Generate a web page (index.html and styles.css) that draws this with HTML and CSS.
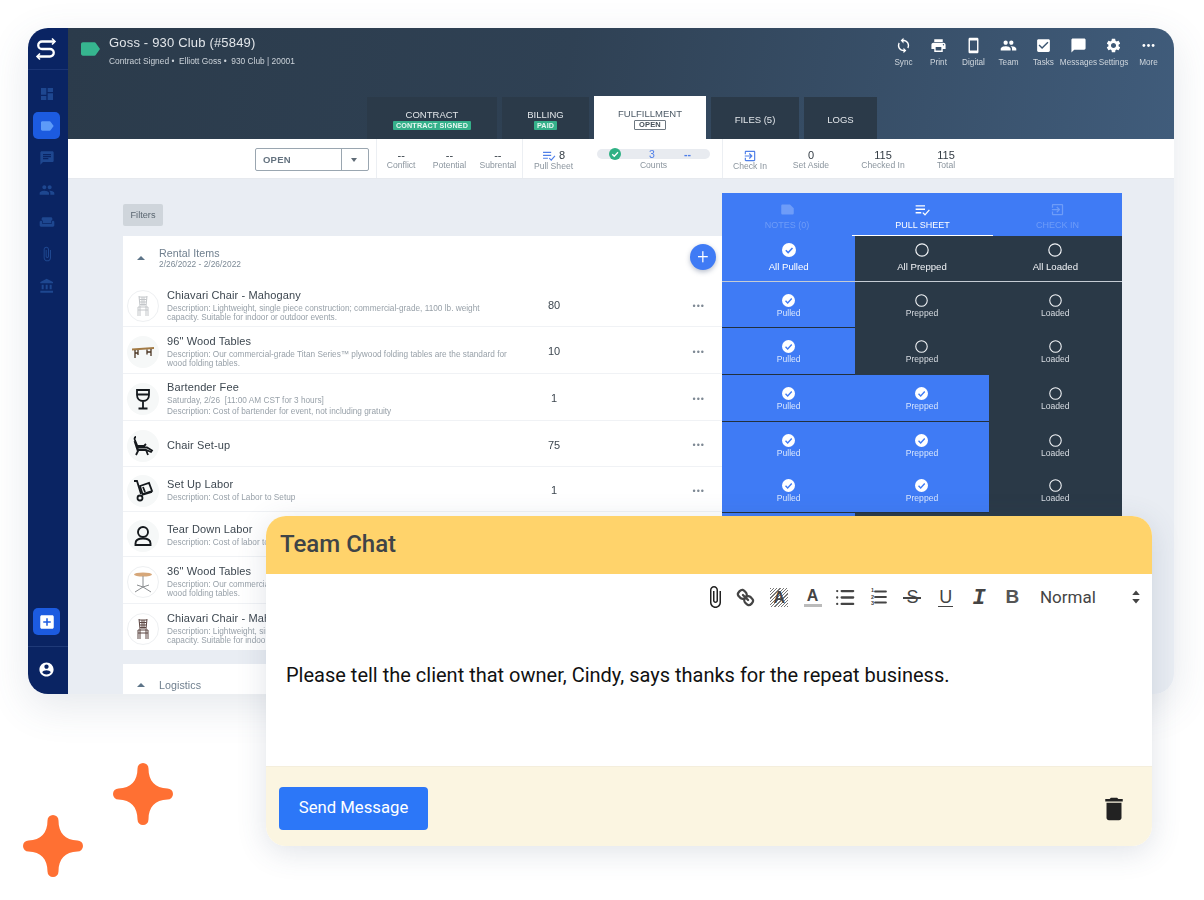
FILE: index.html
```html
<!DOCTYPE html>
<html lang="en">
<head>
<meta charset="utf-8">
<title>Team Chat</title>
<link rel="stylesheet" href="styles.css">
</head>
<body>
<svg class="defs" width="0" height="0" aria-hidden="true">
  <symbol id="i-checked" viewBox="0 0 24 24"><circle cx="12" cy="12" r="12" fill="#fff"/><path d="M6.500 12.500l4 4 7.500-8" fill="none" stroke="#3f7bf5" stroke-width="2.600"/></symbol>
  <symbol id="i-open" viewBox="0 0 24 24"><circle cx="12" cy="12" r="10.600" fill="none" stroke="#f2f4f7" stroke-width="2"/></symbol>
  <symbol id="i-pull" viewBox="0 0 24 24"><path d="M1 5h15v2.200H1zM1 10.500h15v2.200H1zM1 16h9v2.200H1z" fill="currentColor"/><path d="M12.500 17l3.500 3.500 7-8" fill="none" stroke="currentColor" stroke-width="2"/></symbol>
  <symbol id="i-checkin" viewBox="0 0 24 24"><path fill="currentColor" d="M10.090 15.590L11.500 17l5-5-5-5-1.410 1.410L12.670 11H3v2h9.670l-2.580 2.590zM19 3H5c-1.110 0-2 .9-2 2v4h2V5h14v14H5v-4H3v4c0 1.100.89 2 2 2h14c1.100 0 2-.9 2-2V5c0-1.100-.9-2-2-2z"/></symbol>
  <symbol id="i-star" viewBox="0 0 60 62"><path fill="#ff7033" d="M30 0a5.500 5.500 0 0 1 5.500 5.500C35.500 18 42 25 54.500 25.500a5.500 5.500 0 0 1 0 11C42 37 35.500 44 35.500 56.500a5.500 5.500 0 0 1-11 0C24.500 44 18 37 5.500 36.500a5.500 5.500 0 0 1 0-11C18 25 24.500 18 24.500 5.500A5.500 5.500 0 0 1 30 0z"/></symbol>
  <symbol id="t-chiavari" viewBox="0 0 24 24"><path d="M8 2l1 10v10M16 2l-1 10v10M8 3h8M8.500 5.500h7M8.800 8h6.400M9 10.500h6M7 13h10M7 13v9M17 13v9M11 3v9M13 3v9M7 16h10" fill="none" stroke="currentColor" stroke-width="1"/></symbol>
  <symbol id="t-table" viewBox="0 0 24 24"><path d="M1 8.500l22-1.500v2L1 10.500z" fill="#a27a45"/><path d="M4 10v8M7 10v5M4 13h3M20 9v7M16 9.500v5M16 12h4" fill="none" stroke="#4b3522" stroke-width="1.300"/></symbol>
  <symbol id="t-wine" viewBox="0 0 24 24"><path d="M6 3h12v5c0 3.500-2.500 6-6 6s-6-2.500-6-6zM6 7.500h12M12 14v7M7.500 21.500h9" fill="none" stroke="#15191d" stroke-width="1.800"/></symbol>
  <symbol id="t-lounge" viewBox="0 0 24 24"><path d="M5 3c-1 0-1.800 1-1.300 2.500L7 13.500h9l5 3-1 1.500-5-2H6.500L3.500 7M8 15l-3 6M15 16l2 5M7 12h6l2-2" fill="none" stroke="#15191d" stroke-width="1.800"/></symbol>
  <symbol id="t-truck" viewBox="0 0 24 24"><path d="M3 2h3l4 13" fill="none" stroke="#15191d" stroke-width="1.800"/><circle cx="9" cy="19" r="2.500" fill="none" stroke="#15191d" stroke-width="1.800"/><path d="M11 16l10-3M9 7l9-3 3 8-9.500 3zM12 8l2 5" fill="none" stroke="#15191d" stroke-width="1.800"/></symbol>
  <symbol id="t-person" viewBox="0 0 24 24"><circle cx="12" cy="8" r="5" fill="none" stroke="#15191d" stroke-width="1.900"/><path d="M4.500 21v-1.500c0-3 2.500-5 7.500-5s7.500 2 7.500 5V21z" fill="none" stroke="#15191d" stroke-width="1.900"/></symbol>
  <symbol id="t-round" viewBox="0 0 24 24"><ellipse cx="12" cy="4.500" rx="9" ry="2" fill="#d6a77a"/><path d="M12 6v11M12 17l-8 5M12 17l8 5M12 17l-6-2M12 17l6-2" fill="none" stroke="#8a8d90" stroke-width="1"/></symbol>
</svg>

<div class="stage">
  <section class="app">
    <nav class="side">
      <div class="logo">
        <svg viewBox="0 0 24 24" width="24" height="24"><path d="M20 4.500H8a3.750 3.750 0 0 0 0 7.500h8a3.750 3.750 0 0 1 0 7.500H4" fill="none" stroke="#fff" stroke-width="2.300"/><path d="M18 1.500l3 3-3 3M6 16.500l-3 3 3 3" fill="none" stroke="#fff" stroke-width="1.600"/></svg>
      </div>
      <div class="side-item"><svg viewBox="0 0 24 24"><path d="M3 13h8V3H3v10zm0 8h8v-6H3v6zm10 0h8V11h-8v10zm0-18v6h8V3h-8z"/></svg></div>
      <div class="side-item is-active"><svg viewBox="0 0 24 24"><path d="M17.630 5.840C17.270 5.330 16.670 5 16 5L5 5.010C3.900 5.010 3 5.900 3 7v10c0 1.100.9 1.990 2 1.990L16 19c.67 0 1.270-.33 1.630-.84L22 12l-4.370-6.160z"/></svg></div>
      <div class="side-item"><svg viewBox="0 0 24 24"><path d="M20 2H4c-1.100 0-1.990.9-1.990 2L2 22l4-4h14c1.100 0 2-.9 2-2V4c0-1.100-.9-2-2-2zM6 9h12v2H6V9zm8 5H6v-2h8v2zm4-6H6V6h12v2z"/></svg></div>
      <div class="side-item"><svg viewBox="0 0 24 24"><path d="M16 11c1.660 0 2.990-1.340 2.990-3S17.660 5 16 5c-1.660 0-3 1.340-3 3s1.340 3 3 3zm-8 0c1.660 0 2.990-1.340 2.990-3S9.660 5 8 5C6.340 5 5 6.340 5 8s1.340 3 3 3zm0 2c-2.330 0-7 1.170-7 3.500V19h14v-2.500c0-2.330-4.670-3.500-7-3.500zm8 0c-.29 0-.62.02-.97.05 1.160.84 1.970 1.970 1.970 3.450V19h6v-2.500c0-2.330-4.670-3.500-7-3.500z"/></svg></div>
      <div class="side-item"><svg viewBox="0 0 24 24"><path d="M21 10c-1.100 0-2 .9-2 2v3H5v-3c0-1.100-.9-2-2-2s-2 .9-2 2v5c0 1.100.9 2 2 2h18c1.100 0 2-.9 2-2v-5c0-1.100-.9-2-2-2zm-3-5H6c-1.100 0-2 .9-2 2v2.150c1.160.41 2 1.510 2 2.820V14h12v-2.030c0-1.300.84-2.400 2-2.820V7c0-1.100-.9-2-2-2z"/></svg></div>
      <div class="side-item"><svg viewBox="0 0 24 24"><path d="M16.500 6v11.500c0 2.210-1.790 4-4 4s-4-1.790-4-4V5c0-1.380 1.120-2.500 2.500-2.500s2.500 1.120 2.500 2.500v10.500c0 .55-.45 1-1 1s-1-.45-1-1V6H10v9.500c0 1.380 1.120 2.500 2.500 2.500s2.500-1.120 2.500-2.500V5c0-2.210-1.790-4-4-4S7 2.790 7 5v12.500c0 3.040 2.460 5.500 5.500 5.500s5.500-2.460 5.500-5.500V6h-1.500z"/></svg></div>
      <div class="side-item"><svg viewBox="0 0 24 24"><path d="M4 10v7h3v-7H4zm6 0v7h3v-7h-3zM2 22h19v-3H2v3zm14-12v7h3v-7h-3zm-4.500-9L2 6v2h19V6l-9.500-5z"/></svg></div>
      <div class="side-bottom">
        <div class="side-add"><svg viewBox="0 0 24 24"><path d="M19 3H5c-1.110 0-2 .9-2 2v14c0 1.100.89 2 2 2h14c1.100 0 2-.9 2-2V5c0-1.100-.9-2-2-2zm-2 10h-4v4h-2v-4H7v-2h4V7h2v4h4v2z"/></svg></div>
        <div class="side-user"><svg viewBox="0 0 24 24"><path d="M12 2C6.480 2 2 6.480 2 12s4.480 10 10 10 10-4.480 10-10S17.520 2 12 2zm0 3c1.660 0 3 1.340 3 3s-1.340 3-3 3-3-1.340-3-3 1.340-3 3-3zm0 14.200c-2.500 0-4.710-1.280-6-3.220.03-1.990 4-3.080 6-3.080 1.990 0 5.970 1.090 6 3.080-1.290 1.940-3.500 3.220-6 3.220z"/></svg></div>
      </div>
    </nav>

    <div class="main">
      <header class="head">
        <div class="head-top">
          <svg class="head-tag" viewBox="0 0 20 14"><path d="M2 0h12c.8 0 1.300.3 1.700.9L20 7l-4.300 6.100c-.4.6-.9.9-1.700.9H2c-1.100 0-2-.9-2-2V2C0 .9.900 0 2 0z"/></svg>
          <div class="head-info">
            <h1 class="head-title">Goss - 930 Club (#5849)</h1>
            <p class="head-sub">Contract Signed •&nbsp; Elliott Goss •&nbsp; 930 Club | 20001</p>
          </div>
          <div class="actions">
            <div class="action"><svg viewBox="0 0 24 24"><path d="M12 4V1L8 5l4 4V6c3.310 0 6 2.690 6 6 0 1.010-.25 1.970-.7 2.800l1.460 1.460C19.540 15.030 20 13.570 20 12c0-4.420-3.580-8-8-8zm0 14c-3.310 0-6-2.690-6-6 0-1.010.25-1.970.7-2.800L5.240 7.740C4.460 8.970 4 10.430 4 12c0 4.420 3.580 8 8 8v3l4-4-4-4v3z"/></svg><span>Sync</span></div>
            <div class="action"><svg viewBox="0 0 24 24"><path d="M19 8H5c-1.660 0-3 1.340-3 3v6h4v4h12v-4h4v-6c0-1.660-1.340-3-3-3zm-3 11H8v-5h8v5zm3-7c-.55 0-1-.45-1-1s.45-1 1-1 1 .45 1 1-.45 1-1 1zm-1-9H6v4h12V3z"/></svg><span>Print</span></div>
            <div class="action"><svg viewBox="0 0 24 24"><path d="M17 1.010L7 1c-1.100 0-2 .9-2 2v18c0 1.100.9 2 2 2h10c1.100 0 2-.9 2-2V3c0-1.100-.9-1.990-2-1.990zM17 19H7V5h10v14z"/></svg><span>Digital</span></div>
            <div class="action"><svg viewBox="0 0 24 24"><path d="M16 11c1.660 0 2.990-1.340 2.990-3S17.660 5 16 5c-1.660 0-3 1.340-3 3s1.340 3 3 3zm-8 0c1.660 0 2.990-1.340 2.990-3S9.660 5 8 5C6.340 5 5 6.340 5 8s1.340 3 3 3zm0 2c-2.330 0-7 1.170-7 3.500V19h14v-2.500c0-2.330-4.670-3.500-7-3.500zm8 0c-.29 0-.62.02-.97.05 1.160.84 1.970 1.970 1.970 3.450V19h6v-2.500c0-2.330-4.670-3.500-7-3.500z"/></svg><span>Team</span></div>
            <div class="action"><svg viewBox="0 0 24 24"><path d="M19 3H5c-1.110 0-2 .9-2 2v14c0 1.100.89 2 2 2h14c1.110 0 2-.9 2-2V5c0-1.100-.89-2-2-2zm-9 14l-5-5 1.410-1.410L10 14.170l7.590-7.590L19 8l-9 9z"/></svg><span>Tasks</span></div>
            <div class="action"><svg viewBox="0 0 24 24"><path d="M20 2H4c-1.100 0-2 .9-2 2v18l4-4h14c1.100 0 2-.9 2-2V4c0-1.100-.9-2-2-2z"/></svg><span>Messages</span></div>
            <div class="action"><svg viewBox="0 0 24 24"><path d="M19.140 12.940c.04-.3.06-.61.06-.94 0-.32-.02-.64-.07-.94l2.030-1.580c.18-.14.23-.41.12-.61l-1.920-3.320c-.12-.22-.37-.29-.59-.22l-2.390.96c-.5-.38-1.030-.7-1.620-.94l-.36-2.540c-.04-.24-.24-.41-.48-.41h-3.840c-.24 0-.43.17-.47.41l-.36 2.540c-.59.24-1.130.57-1.620.94l-2.390-.96c-.22-.08-.47 0-.59.22L2.740 8.870c-.12.21-.08.47.12.61l2.030 1.580c-.05.3-.09.63-.09.94s.02.64.07.94l-2.030 1.580c-.18.14-.23.41-.12.61l1.920 3.320c.12.22.37.29.59.22l2.390-.96c.5.38 1.030.7 1.620.94l.36 2.540c.05.24.24.41.48.41h3.840c.24 0 .44-.17.47-.41l.36-2.540c.59-.24 1.130-.56 1.620-.94l2.390.96c.22.08.47 0 .59-.22l1.920-3.320c.12-.22.07-.47-.12-.61l-2.010-1.580zM12 15.600c-1.980 0-3.600-1.620-3.600-3.600s1.620-3.600 3.600-3.600 3.600 1.620 3.600 3.600-1.620 3.600-3.600 3.600z"/></svg><span>Settings</span></div>
            <div class="action"><svg viewBox="0 0 24 24"><circle cx="5.500" cy="12" r="2"/><circle cx="12" cy="12" r="2"/><circle cx="18.500" cy="12" r="2"/></svg><span>More</span></div>
          </div>
        </div>
        <div class="tabs">
          <div class="tab tab-contract">CONTRACT<span class="badge">CONTRACT SIGNED</span></div>
          <div class="tab tab-billing">BILLING<span class="badge">PAID</span></div>
          <div class="tab tab-fulfil is-current">FULFILLMENT<span class="badge badge-open">OPEN</span></div>
          <div class="tab tab-files">FILES (5)</div>
          <div class="tab tab-logs">LOGS</div>
        </div>
      </header>

      <div class="bar">
        <div class="select"><span class="select-text">OPEN</span><span class="select-caret"></span></div>
        <div class="bar-group group-a">
          <div class="stat"><b>--</b><span>Conflict</span></div>
          <div class="stat"><b>--</b><span>Potential</span></div>
          <div class="stat"><b>--</b><span>Subrental</span></div>
        </div>
        <div class="bar-group group-b">
          <div class="stat stat-pull"><b><svg class="pull-icon"><use href="#i-pull"/></svg>8</b><span>Pull Sheet</span></div>
          <div class="counts">
            <div class="pill">
              <svg class="pill-check" viewBox="0 0 24 24"><circle cx="12" cy="12" r="12" fill="#2fb184"/><path d="M6.500 12.500l4 4 7.500-8" fill="none" stroke="#fff" stroke-width="2.600"/></svg>
              <b class="pill-num">3</b><b class="pill-dash">--</b>
            </div>
            <span>Counts</span>
          </div>
        </div>
        <div class="bar-group group-c">
          <div class="stat stat-checkin"><b><svg class="checkin-icon"><use href="#i-checkin"/></svg></b><span>Check In</span></div>
          <div class="stat stat-aside"><b>0</b><span>Set Aside</span></div>
          <div class="stat stat-in"><b>115</b><span>Checked In</span></div>
          <div class="stat stat-total"><b>115</b><span>Total</span></div>
        </div>
      </div>

      <div class="content">
        <div class="left">
          <button class="filters" type="button">Filters</button>
          <div class="card list">
            <div class="list-head">
              <span class="caret"></span>
              <div class="list-title"><h2>Rental Items</h2><p>2/26/2022 - 2/26/2022</p></div>
              <span class="fab">+</span>
            </div>
            <div class="rows">
              <div class="row"><div class="thumb thumb-light"><svg><use href="#t-chiavari"/></svg></div><div class="row-text"><h3>Chiavari Chair - Mahogany</h3><p>Description: Lightweight, single piece construction; commercial-grade, 1100 lb. weight capacity. Suitable for indoor or outdoor events.</p></div><div class="qty">80</div><div class="dots">•••</div></div>
              <div class="row"><div class="thumb"><svg><use href="#t-table"/></svg></div><div class="row-text"><h3>96" Wood Tables</h3><p>Description: Our commercial-grade Titan Series™ plywood folding tables are the standard for wood folding tables.</p></div><div class="qty">10</div><div class="dots">•••</div></div>
              <div class="row"><div class="thumb"><svg><use href="#t-wine"/></svg></div><div class="row-text"><h3>Bartender Fee</h3><p>Saturday, 2/26&nbsp; [11:00 AM CST for 3 hours]</p><p>Description: Cost of bartender for event, not including gratuity</p></div><div class="qty">1</div><div class="dots">•••</div></div>
              <div class="row"><div class="thumb"><svg><use href="#t-lounge"/></svg></div><div class="row-text"><h3>Chair Set-up</h3></div><div class="qty">75</div><div class="dots">•••</div></div>
              <div class="row"><div class="thumb"><svg><use href="#t-truck"/></svg></div><div class="row-text"><h3>Set Up Labor</h3><p>Description: Cost of Labor to Setup</p></div><div class="qty">1</div><div class="dots">•••</div></div>
              <div class="row"><div class="thumb"><svg><use href="#t-person"/></svg></div><div class="row-text"><h3>Tear Down Labor</h3><p>Description: Cost of labor to Teardown</p></div><div class="qty">1</div><div class="dots">•••</div></div>
              <div class="row"><div class="thumb thumb-light"><svg><use href="#t-round"/></svg></div><div class="row-text"><h3>36" Wood Tables</h3><p>Description: Our commercial-grade Titan Series™ plywood folding tables are the standard for wood folding tables.</p></div><div class="qty">10</div><div class="dots">•••</div></div>
              <div class="row"><div class="thumb thumb-light thumb-brown"><svg><use href="#t-chiavari"/></svg></div><div class="row-text"><h3>Chiavari Chair - Mahogany</h3><p>Description: Lightweight, single piece construction; commercial-grade, 1100 lb. weight capacity. Suitable for indoor or outdoor events.</p></div><div class="qty">80</div><div class="dots">•••</div></div>
            </div>
          </div>
          <div class="card logistics"><span class="caret"></span><h2>Logistics</h2></div>
        </div>

        <div class="panel">
          <div class="panel-tabs">
            <div class="ptab"><svg viewBox="0 0 24 24"><path d="M22 10l-6-6H4c-1.100 0-2 .9-2 2v12.010c0 1.100.9 1.990 2 1.990l16-.01c1.100 0 2-.89 2-1.990v-8z"/></svg><span>NOTES (0)</span></div>
            <div class="ptab is-current"><svg><use href="#i-pull"/></svg><span>PULL SHEET</span></div>
            <div class="ptab"><svg><use href="#i-checkin"/></svg><span>CHECK IN</span></div>
          </div>
          <div class="grid">
            <div class="cells cells-all"><div class="cell on"><svg><use href="#i-checked"/></svg><span>All Pulled</span></div><div class="cell"><svg><use href="#i-open"/></svg><span>All Prepped</span></div><div class="cell"><svg><use href="#i-open"/></svg><span>All Loaded</span></div></div>
            <div class="cells"><div class="cell on"><svg><use href="#i-checked"/></svg><span>Pulled</span></div><div class="cell"><svg><use href="#i-open"/></svg><span>Prepped</span></div><div class="cell"><svg><use href="#i-open"/></svg><span>Loaded</span></div></div>
            <div class="cells"><div class="cell on"><svg><use href="#i-checked"/></svg><span>Pulled</span></div><div class="cell"><svg><use href="#i-open"/></svg><span>Prepped</span></div><div class="cell"><svg><use href="#i-open"/></svg><span>Loaded</span></div></div>
            <div class="cells"><div class="cell on"><svg><use href="#i-checked"/></svg><span>Pulled</span></div><div class="cell on"><svg><use href="#i-checked"/></svg><span>Prepped</span></div><div class="cell"><svg><use href="#i-open"/></svg><span>Loaded</span></div></div>
            <div class="cells cells-joined"><div class="cell on"><svg><use href="#i-checked"/></svg><span>Pulled</span></div><div class="cell on"><svg><use href="#i-checked"/></svg><span>Prepped</span></div><div class="cell"><svg><use href="#i-open"/></svg><span>Loaded</span></div></div>
            <div class="cells"><div class="cell on"><svg><use href="#i-checked"/></svg><span>Pulled</span></div><div class="cell on"><svg><use href="#i-checked"/></svg><span>Prepped</span></div><div class="cell"><svg><use href="#i-open"/></svg><span>Loaded</span></div></div>
            <div class="cells"><div class="cell on"></div><div class="cell"></div><div class="cell"></div></div>
          </div>
        </div>
      </div>
    </div>
  </section>

  <section class="chat">
    <h2 class="chat-head">Team Chat</h2>
    <div class="tools">
      <span class="tool tool-first"><svg class="tool-clip" viewBox="0 0 24 24"><path d="M16.500 6v11.500c0 2.210-1.790 4-4 4s-4-1.790-4-4V5c0-1.380 1.120-2.500 2.500-2.500s2.500 1.120 2.500 2.500v10.500c0 .55-.45 1-1 1s-1-.45-1-1V6H10v9.500c0 1.380 1.120 2.500 2.500 2.500s2.500-1.120 2.500-2.500V5c0-2.210-1.790-4-4-4S7 2.790 7 5v12.500c0 3.040 2.460 5.500 5.500 5.500s5.500-2.460 5.500-5.500V6h-1.500z"/></svg></span>
      <span class="tool"><svg class="tool-svg" viewBox="0 0 18 18"><line x1="7" x2="11" y1="7" y2="11"/><path d="M8.900 4.577a3.476 3.476 0 0 1 .36 4.679A3.476 3.476 0 0 1 4.577 8.900C3.185 7.500 2.035 6.400 4.217 4.217S7.500 3.185 8.900 4.577z"/><path d="M13.423 9.100a3.476 3.476 0 0 0-4.679-.36 3.476 3.476 0 0 0 .36 4.679c1.392 1.392 2.500 2.542 4.679.36s1.032-3.279-.36-4.679z"/></svg></span>
      <span class="tool"><span class="t-hatch">A</span></span>
      <span class="tool"><span class="t-color">A</span></span>
      <span class="tool"><svg class="tool-svg" viewBox="0 0 18 18"><path d="M6 4h9M6 9h9M6 14h9M2.500 4h.01M2.500 9h.01M2.500 14h.01"/></svg></span>
      <span class="tool"><span class="t-ordered"><span class="t-nums">1<br>2<br>3</span><svg class="tool-svg" viewBox="0 0 12 18"><path d="M1 4h10M1 9h10M1 14h10"/></svg></span></span>
      <span class="tool"><span class="t-strike">S</span></span>
      <span class="tool"><span class="t-under">U</span></span>
      <span class="tool"><span class="t-ital">I</span></span>
      <span class="tool"><span class="t-bold">B</span></span>
      <div class="format"><span>Normal</span><svg viewBox="0 0 10 16" width="10" height="16"><path d="M5 1.500l3.800 4.500H1.200zM5 14.500L1.200 10h7.600z" fill="#444"/></svg></div>
    </div>
    <p class="message">Please tell the client that owner, Cindy, says thanks for the repeat business.</p>
    <div class="chat-foot">
      <button class="send" type="button">Send Message</button>
      <svg class="trash" viewBox="0 0 24 24"><path d="M6 19c0 1.100.9 2 2 2h8c1.100 0 2-.9 2-2V7H6v12zM19 4h-3.500l-1-1h-5l-1 1H5v2h14V4z"/></svg>
    </div>
  </section>

  <svg class="star star-a"><use href="#i-star"/></svg>
  <svg class="star star-b"><use href="#i-star"/></svg>
</div>
</body>
</html>
```

FILE: styles.css
```css
* { box-sizing: border-box; }
html, body { margin: 0; padding: 0; background: #fff; }
body { font-family: "Liberation Sans", Arial, sans-serif; }
h1, h2, h3, p { margin: 0; font-weight: normal; }
button { font: inherit; border: 0; }
.defs { position: absolute; }

.stage { position: relative; width: 1204px; height: 900px; overflow: hidden; background: #fff; }

/* app window */
.app {
  position: absolute; left: 28px; top: 28px; width: 1146px; height: 666px;
  display: flex; border-radius: 20px; overflow: hidden;
  box-shadow: 0 12px 40px rgba(70, 90, 120, .14);
  filter: blur(.4px);
}
.side { width: 40px; flex: none; background: #0a2463; display: flex; flex-direction: column; align-items: flex-start; }
.logo { width: 100%; height: 42px; display: flex; align-items: center; justify-content: center; border-bottom: 1px solid #1a3474; flex: none; padding-right: 4px; }
.logo + .side-item { margin-top: 10px; }
.side-item { width: 27px; height: 27px; margin: 0 0 5px 5px; border-radius: 5px; display: flex; align-items: center; justify-content: center; flex: none; }
.side-item svg { width: 16px; height: 16px; fill: #1e4790; }
.side-item.is-active { background: #1c5be0; }
.side-item.is-active svg { fill: #5d9bf8; }
.side-bottom { margin-top: auto; width: 100%; display: flex; flex-direction: column; align-items: flex-start; }
.side-add { width: 27px; height: 27px; border-radius: 5px; background: #1c5be0; display: flex; align-items: center; justify-content: center; margin: 0 0 11px 5px; }
.side-add svg { width: 18px; height: 18px; fill: #fff; }
.side-user { width: 100%; height: 48px; border-top: 1px solid #1f3a78; display: flex; align-items: center; justify-content: center; padding: 0 3px 2px 0; }
.side-user svg { width: 17px; height: 17px; fill: #fff; }

.main { flex: 1; min-width: 0; display: flex; flex-direction: column; }

/* header */
.head { height: 111px; flex: none; display: flex; flex-direction: column; background: linear-gradient(100deg, #2b3b4b 0%, #2f4154 45%, #405c7b 100%); }
.head-top { display: flex; padding-left: 13px; flex: 1; min-height: 0; }
.head-tag { width: 19px; height: 14px; margin-top: 14px; fill: #36b58f; flex: none; }
.head-info { margin-left: 9px; padding-top: 7px; color: #e2e6ea; }
.head-title { font-size: 13px; line-height: 16px; letter-spacing: .18px; }
.head-sub { font-size: 8.400px; line-height: 10px; margin-top: 5px; color: #ccd3da; }
.actions { margin-left: auto; display: flex; padding-right: 8px; padding-top: 9px; }
.action { width: 35px; display: flex; flex-direction: column; align-items: center; color: #cfd6dd; font-size: 8.200px; line-height: 10px; white-space: nowrap; }
.action svg { width: 17px; height: 17px; fill: #fff; margin-bottom: 4px; }

.tabs { display: flex; gap: 5px; padding-left: 299px; height: 43px; align-items: flex-end; flex: none; }
.tab { height: 42px; background: #2b3a49; color: #e2e6ea; font-size: 9.500px; line-height: 10px; padding-top: 4px; display: flex; flex-direction: column; align-items: center; justify-content: center; }
.tab-contract { width: 130px; }
.tab-billing { width: 87px; }
.tab-fulfil { width: 112px; }
.tab-files { width: 88px; }
.tab-logs { width: 73px; }
.tab.is-current { background: #fff; color: #4d5a66; height: 43px; }
.badge { margin-top: 1px; background: #35b08a; color: #e6f6f0; font-size: 7.200px; line-height: 9px; font-weight: bold; padding: 0 3px; border-radius: 1px; letter-spacing: .15px; }
.badge-open { background: #fff; color: #454f58; border: 1px solid #6d7780; padding: 0 4px; line-height: 8px; font-size: 7.500px; }

/* status bar */
.bar { height: 40px; flex: none; background: #fff; display: flex; border-bottom: 1px solid #e6e9ee; padding-left: 187px; }
.select { width: 114px; height: 23px; margin-top: 9px; border: 1px solid #9aa6b0; border-radius: 2px; display: flex; align-items: center; }
.select-text { flex: 1; padding-left: 7px; font-size: 9.500px; font-weight: bold; color: #64727f; letter-spacing: .2px; }
.select-caret { width: 27px; height: 100%; border-left: 1px solid #9aa6b0; position: relative; }
.select-caret::after { content: ""; position: absolute; left: 9px; top: 9px; border: 3.500px solid transparent; border-top: 4px solid #5f6b76; border-bottom: 0; }
.bar-group { display: flex; height: 100%; border-left: 1px solid #eceff3; }
.group-a { margin-left: 7px; width: 146px; }
.group-b { width: 200px; }
.group-c { flex: 1; }
.stat { width: 48.500px; display: flex; flex-direction: column; align-items: center; padding-top: 11px; }
.stat b { font-weight: normal; font-size: 11px; line-height: 11px; color: #333c44; height: 11px; display: flex; align-items: center; gap: 3px; }
.stat span, .counts span { font-size: 8.600px; line-height: 10px; color: #8b959e; white-space: nowrap; }
.stat span { margin-top: -1px; }
.stat-pull { width: 61px; }
.stat-pull span { margin-top: 0; }
.pull-icon { width: 14px; height: 13px; color: #4f7fe8; }
.checkin-icon { width: 14px; height: 14px; color: #4f7fe8; }
.stat-checkin { width: 54px; }
.stat-checkin span { margin-top: 0; }
.stat-aside { width: 68px; }
.stat-in { width: 76px; }
.stat-total { width: 50px; }
.counts { margin-left: 13px; width: 113px; display: flex; flex-direction: column; align-items: center; padding-top: 10px; }
.pill { width: 100%; height: 10px; border-radius: 5px; background: #e8ebf0; display: flex; align-items: center; margin-bottom: 1px; }
.pill-check { width: 12px; height: 12px; margin-left: 12px; flex: none; }
.pill-num { margin-left: 28px; font-size: 10.500px; font-weight: normal; color: #4f7fe8; width: 6px; }
.pill-dash { margin-left: 29px; font-size: 10.500px; color: #4f7fe8; }

/* content */
.content { flex: 1; min-height: 0; background: #e9edf3; display: flex; padding-left: 55px; overflow: hidden; }
.left { width: 599px; flex: none; padding-top: 25px; }
.filters { display: block; width: 40px; height: 22px; padding: 0; background: #cfd5db; color: #5a6670; font-size: 9.200px; border-radius: 2px; }
.card { background: #fff; }
.list { margin-top: 10px; }
.list-head { height: 46px; display: flex; align-items: flex-start; padding: 11px 6px 0 14px; }
.caret { flex: none; width: 0; height: 0; border: 4px solid transparent; border-bottom: 4px solid #5d7488; border-top: 0; margin-top: 9px; }
.list-title { margin-left: 14px; }
.list-title h2, .logistics h2 { font-size: 10.700px; line-height: 12px; color: #6f7f8e; letter-spacing: .05px; }
.list-title p { font-size: 8.400px; line-height: 11px; color: #7d8a96; }
.fab { margin-left: auto; margin-top: -3px; width: 26px; height: 26px; border-radius: 50%; background: #3f7bf5; color: #fff; font-family: Roboto, sans-serif; font-weight: 300; font-size: 20px; line-height: 25px; text-align: center; box-shadow: 0 2px 5px rgba(50, 70, 110, .35); }
.rows { display: grid; grid-template-rows: 45px 47px 47px 46px 45px 45px 47px 46px; }
.row { display: grid; grid-template-columns: 32px 352px 86px 1fr; align-items: center; padding-left: 4px; border-bottom: 1px solid #f0f2f5; }
.row:last-child { border-bottom: 0; }
.thumb { width: 32px; height: 32px; margin-top: 4px; border-radius: 50%; background: #f6f8f8; display: flex; align-items: center; justify-content: center; color: #c3c6c9; }
.thumb svg { width: 24px; height: 24px; }
.thumb-light { background: #fff; border: 1px solid #eef0f2; }
.thumb-brown { color: #5d4643; }
.row-text { padding: 3px 0 0 8px; min-width: 0; }
.row-text h3 { font-size: 11px; line-height: 13px; color: #3d4750; letter-spacing: .12px; }
.row-text p { font-size: 8.250px; line-height: 9.500px; color: #98a1a9; margin-top: 2px; }
.row-text p + p { margin-top: 1px; }
.qty { text-align: center; font-size: 11px; color: #3d4750; padding-top: 2px; }
.dots { justify-self: end; padding: 3px 17px 0 0; color: #7e8994; font-size: 9px; letter-spacing: 1px; }
.logistics { margin-top: 14px; height: 60px; display: flex; align-items: flex-start; padding: 15px 0 0 14px; }
.logistics .caret { margin-top: 4px; }
.logistics h2 { margin-left: 14px; }

/* right panel */
.panel { width: 400px; flex: none; margin-top: 14px; background: #3f7bf5; }
.panel-tabs { display: grid; grid-template-columns: 130px 141px 129px; height: 43px; }
.ptab { display: flex; flex-direction: column; align-items: center; color: #6e9cf8; font-size: 9px; line-height: 10px; padding-top: 9px; }
.ptab svg { width: 15px; height: 15px; fill: #6e9cf8; color: #6e9cf8; margin-bottom: 3px; }
.ptab.is-current { color: #fff; border-bottom: 1.500px solid #fff; }
.ptab.is-current svg { fill: #fff; color: #fff; }
.grid { display: grid; grid-template-rows: 46px 46px 47px 47px 45px 46px 40px; background: #2a3947; }
.cells { display: grid; grid-template-columns: repeat(3, 1fr); }
.cells-all { border-bottom: 1px solid #c5ccd4; }
.cell { background: #2a3947; color: #d7dce2; display: flex; flex-direction: column; align-items: center; padding-top: 12px; font-size: 8.600px; line-height: 10px; }
.cell svg { width: 13px; height: 13px; margin-bottom: 1px; }
.cell.on { background: #3f7bf5; color: #d6e4fd; border-bottom: 1.500px solid #22303d; }
.cells-joined .cell.on { border-bottom: 0; }
.cells-all .cell { font-size: 9.600px; color: #f2f4f7; padding-top: 7px; }
.cells-all .cell svg { width: 14px; height: 14px; margin-bottom: 5px; }
.cells-all .cell.on { color: #fff; border-bottom: 0; }

/* chat */
.chat {
  position: absolute; left: 266px; top: 516px; width: 886px; height: 330px;
  display: flex; flex-direction: column; border-radius: 20px; overflow: hidden; background: #fff;
  box-shadow: 0 6px 30px rgba(60, 80, 110, .16);
  font-family: Roboto, "Liberation Sans", sans-serif;
}
.chat-head { height: 58px; flex: none; background: #ffd36b; color: #3f4447; font-size: 24px; font-weight: 500; line-height: 57px; padding-left: 14px; }
.tools { height: 46px; flex: none; display: flex; align-items: center; padding-left: 430px; }
.tool { width: 33.300px; flex: none; display: flex; justify-content: center; align-items: center; color: #444; }
.tool-first { margin: 0 -2px 0 2px; }
.tool-clip { width: 24px; height: 24px; fill: #222; }
.tool-svg { width: 23px; height: 23px; fill: none; stroke: #444; stroke-width: 1.800; stroke-linecap: round; }
.t-hatch { font: bold 16px/19px "Liberation Sans", sans-serif; width: 18px; text-align: center; color: #444; background: repeating-linear-gradient(135deg, #777 0 1px, #fff 1px 2.300px); }
.t-color { font: bold 16px/16px "Liberation Sans", sans-serif; color: #444; width: 18px; text-align: center; border-bottom: 3px solid #bbb; }
.t-ordered { display: flex; align-items: center; }
.t-ordered .tool-svg { width: 13px; height: 22px; }
.t-nums { font: bold 5.500px/6.500px "Liberation Sans", sans-serif; color: #444; }
.t-strike { position: relative; font: 18px/20px "Liberation Sans", sans-serif; color: #444; }
.t-strike::after { content: ""; position: absolute; left: -3px; right: -3px; top: 10px; height: 1.500px; background: #444; }
.t-under { font: 18px/18px "Liberation Sans", sans-serif; color: #444; border-bottom: 1.500px solid #444; padding: 0 1px; }
.t-ital { font: italic bold 22px/20px "Liberation Mono", monospace; color: #444; margin-top: 4px; }
.t-bold { font: bold 19px/20px "Liberation Sans", sans-serif; color: #555; }
.format { width: 112px; padding-left: 11px; display: flex; justify-content: space-between; align-items: center; font-size: 17px; color: #444; }
.message { margin: 43px 0 0 20px; font-size: 20px; line-height: 24px; color: #111; flex: none; }
.chat-foot { margin-top: auto; height: 80px; flex: none; background: #fbf5e1; border-top: 1px solid #f4eedc; display: flex; align-items: center; justify-content: space-between; padding: 4px 23px 0 13px; }
.send { width: 149px; height: 43px; padding: 0 0 2px; border-radius: 4px; background: #2c77f8; color: #fff; font-size: 16.700px; font-weight: 400; font-family: inherit; }
.trash { width: 30px; height: 30px; fill: #222; }

/* sparkles */
.star { position: absolute; width: 60px; height: 62px; }
.star-a { left: 113px; top: 763px; }
.star-b { left: 23px; top: 815px; }
```
